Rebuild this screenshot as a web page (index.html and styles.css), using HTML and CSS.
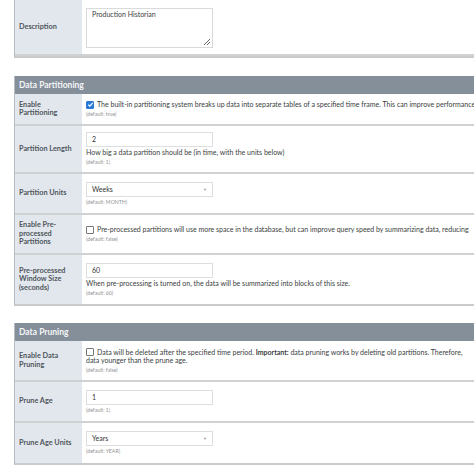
FILE: index.html
```html
<!DOCTYPE html>
<html>
<head>
<meta charset="utf-8">
<link rel="stylesheet" href="styles.css">
</head>
<body>
<div class="page">
  <section class="panel panel-top">
    <div class="row r-desc">
      <div class="label">Description</div>
      <div class="field">
        <div class="textarea">Production Historian
          <svg class="grip" width="8" height="8" viewBox="0 0 8 8"><path d="M7 1L1 7M7 4L4 7" stroke="#555" stroke-width="0.9" fill="none"/></svg>
        </div>
      </div>
    </div>
  </section>

  <section class="panel">
    <div class="head">Data Partitioning</div>
    <div class="row r32">
      <div class="label">Enable Partitioning</div>
      <div class="field">
        <div class="check-line"><span class="cb on"><svg width="7" height="7" viewBox="0 0 7 7"><path d="M1.3 3.6L2.8 5.1L5.8 1.8" stroke="#fff" stroke-width="1.2" fill="none"/></svg></span>The built-in partitioning system breaks up data into separate tables of a specified time frame. This can improve performance</div>
        <div class="def">(default: true)</div>
      </div>
    </div>
    <div class="row r48">
      <div class="label">Partition Length</div>
      <div class="field">
        <div class="input">2</div>
        <div class="help">How big a data partition should be (in time, with the units below)</div>
        <div class="def">(default: 1)</div>
      </div>
    </div>
    <div class="row r41">
      <div class="label">Partition Units</div>
      <div class="field">
        <div class="input select">Weeks<span class="arrow">▼</span></div>
        <div class="def">(default: MONTH)</div>
      </div>
    </div>
    <div class="row r40">
      <div class="label">Enable Pre-processed Partitions</div>
      <div class="field">
        <div class="check-line"><span class="cb"></span>Pre-processed partitions will use more space in the database, but can improve query speed by summarizing data, reducing</div>
        <div class="def">(default: false)</div>
      </div>
    </div>
    <div class="row r49 last">
      <div class="label">Pre-processed Window Size (seconds)</div>
      <div class="field">
        <div class="input">60</div>
        <div class="help">When pre-processing is turned on, the data will be summarized into blocks of this size.</div>
        <div class="def">(default: 60)</div>
      </div>
    </div>
  </section>

  <section class="panel">
    <div class="head">Data Pruning</div>
    <div class="row r41">
      <div class="label">Enable Data Pruning</div>
      <div class="field">
        <div class="check-line wrap"><span class="cb"></span>Data will be deleted after the specified time period. <b>Important:</b> data pruning works by deleting old partitions. Therefore,<br>data younger than the prune age.</div>
        <div class="def">(default: false)</div>
      </div>
    </div>
    <div class="row r41">
      <div class="label">Prune Age</div>
      <div class="field">
        <div class="input">1</div>
        <div class="def">(default: 1)</div>
      </div>
    </div>
    <div class="row r40 last">
      <div class="label">Prune Age Units</div>
      <div class="field">
        <div class="input select">Years<span class="arrow">▼</span></div>
        <div class="def">(default: YEAR)</div>
      </div>
    </div>
  </section>
</div>
</body>
</html>
```

FILE: styles.css
```css
html, body {
  margin: 0;
  padding: 0;
  background: #fff;
  overflow: hidden;
}
body {
  font-family: "Lato", "Open Sans", sans-serif;
  color: #333;
  width: 474px;
  height: 466px;
}
.page {
  padding-left: 14px;
}
.panel {
  width: 760px;
  border-left: 1px solid #b9bdc2;
  border-bottom: 2px solid #c9cbcd;
  margin-bottom: 17px;
}
.panel-top {
  margin-bottom: 18px;
}
.head {
  height: 18px;
  background: #858f99;
  color: #f4f6f8;
  font-weight: bold;
  font-size: 8.5px;
  line-height: 18px;
  padding-left: 4px;
}
.row {
  display: flex;
  border-bottom: 2px solid #cfd1d3;
  box-sizing: border-box;
}
.row.last {
  border-bottom: none;
}
.r-desc { height: 56px; }
.r32 { height: 32px; }
.r40 { height: 40px; }
.r41 { height: 41px; }
.r48 { height: 48px; }
.r49 { height: 49px; }
.label {
  width: 59px;
  flex: none;
  background: #e2e7ed;
  padding-left: 4px;
  padding-right: 4px;
  font-size: 7.3px;
  font-weight: bold;
  color: #50565c;
  display: flex;
  align-items: center;
  line-height: 8.5px;
}
.field {
  flex: 1;
  padding-left: 4px;
  display: flex;
  flex-direction: column;
  justify-content: center;
  font-size: 7px;
  color: #3a3d40;
}
.textarea {
  position: relative;
  width: 120px;
  height: 37px;
  border: 1px solid #d8dadc;
  padding: 1px 0 0 5px;
  box-sizing: content-box;
  font-size: 7px;
  line-height: 9px;
  margin-top: 1px;
}
.grip {
  position: absolute;
  right: 1px;
  bottom: 1px;
}
.input {
  width: 120px;
  height: 13px;
  border: 1px solid #dcdee0;
  padding-left: 5px;
  line-height: 13px;
  font-size: 7px;
  color: #333;
  position: relative;
}
.select .arrow {
  position: absolute;
  right: 5px;
  top: 0;
  font-size: 4px;
  color: #999;
}
.help {
  margin-top: 1px;
  line-height: 9px;
  white-space: nowrap;
}
.check-line {
  white-space: nowrap;
  line-height: 9px;
  display: flex;
  align-items: center;
}
.check-line.wrap {
  display: block;
  line-height: 8.5px;
}
.cb {
  display: inline-block;
  width: 6px;
  height: 6px;
  border: 1px solid #777;
  border-radius: 1px;
  margin-right: 3px;
  vertical-align: -1px;
  background: #fff;
  position: relative;
  flex: none;
}
.cb.on {
  background: #2a7ad6;
  border-color: #2a7ad6;
}
.cb.on svg {
  position: absolute;
  left: -0.5px;
  top: -0.5px;
}
.def {
  font-size: 5.2px;
  color: #909396;
  line-height: 7px;
  margin-top: 2px;
}
```
